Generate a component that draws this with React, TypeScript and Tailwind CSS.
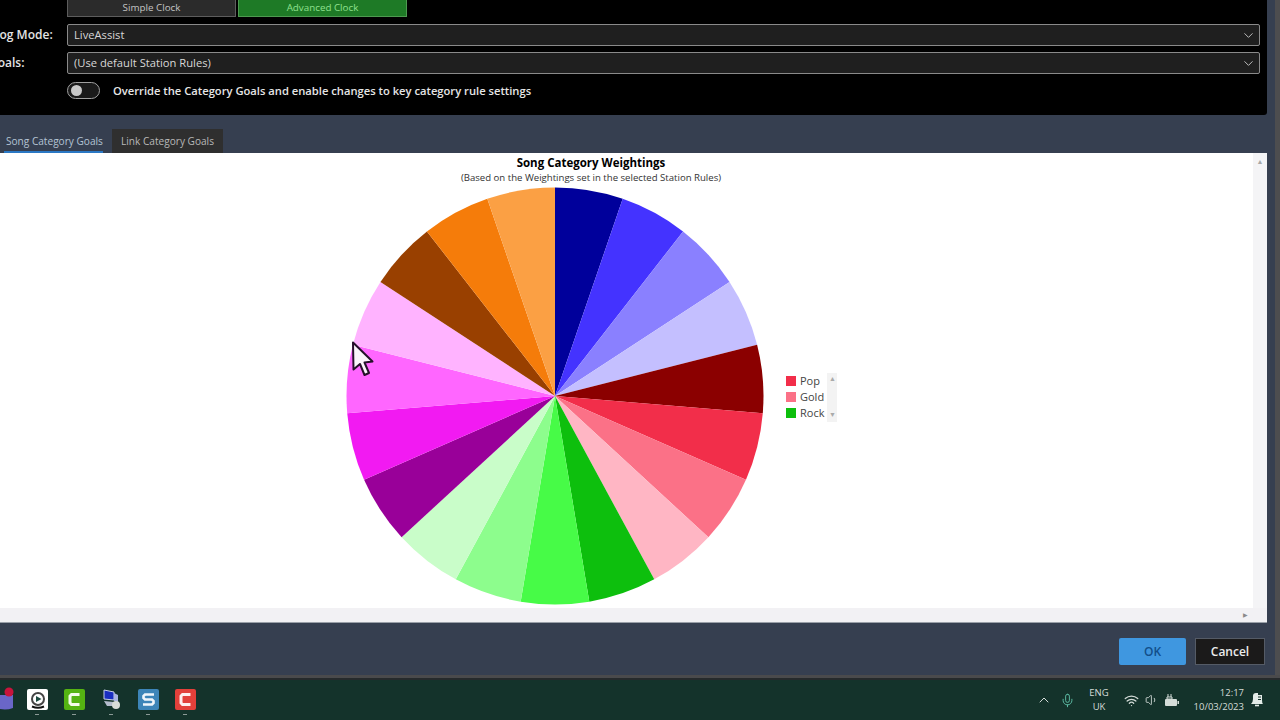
import { ChevronDown, ChevronUp, Mic, Wifi, Volume1 } from "lucide-react";

const slices = [
  "#00009b", "#4433ff", "#8a80ff", "#c4bfff", "#8b0000", "#f22e4a", "#fb7187", "#ffb6c4", "#0dbf0d", "#47fb47",
  "#8dfd8d", "#c9fdc9", "#990099", "#f21af2", "#ff66ff", "#ffb3ff", "#994000", "#f57c0a", "#fba044",
];

function Pie() {
  const cx = 210;
  const cy = 210;
  const r = 208.5;
  const step = (Math.PI * 2) / slices.length;
  return (
    <svg width={420} height={420} viewBox="0 0 420 420" className="shrink-0">
      {slices.map((c, i) => {
        const a = i * step;
        const b = (i + 1) * step;
        const d = `M${cx} ${cy}L${cx + r * Math.sin(a)} ${cy - r * Math.cos(a)}A${r} ${r} 0 0 1 ${cx + r * Math.sin(b)} ${cy - r * Math.cos(b)}Z`;
        return <path key={c} d={d} fill={c} />;
      })}
    </svg>
  );
}

function SelectBox({ label, value, labelClass }: { label: string; value: string; labelClass: string }) {
  return (
    <div className="flex items-center h-[22px]">
      <div className={`shrink-0 text-[12px] font-semibold text-[#e4e4e4] whitespace-nowrap ${labelClass}`}>{label}</div>
      <div className="flex-1 h-[22px] flex items-center justify-between bg-[#1f1f1f] border border-[#8a8a8a] rounded-[2px] pl-[6px] pr-[3px] text-[11.2px] text-[#d8d8d8]">
        <span>{value}</span>
        <ChevronDown size={15} strokeWidth={1.5} className="text-[#c4c4c4]" />
      </div>
    </div>
  );
}

function AppIcon({ className, children }: { className: string; children?: React.ReactNode }) {
  return (
    <div className="relative w-[21px] h-[21px] shrink-0">
      <div className={`w-[21px] h-[21px] rounded-[2px] flex items-center justify-center ${className}`}>{children}</div>
      <div className="absolute left-[8px] -bottom-[5px] w-[4px] h-[1px] bg-[#8b9a96]" />
    </div>
  );
}

export default function App() {
  return (
    <div className="w-[1280px] h-[720px] overflow-hidden flex flex-col bg-[#1c2a28] font-['Open_Sans','Noto_Sans',sans-serif]">
      <div className="h-[675px] shrink-0 flex">
        <div className="w-[1275px] shrink-0 bg-[#363f50] flex flex-col">
          {/* top settings block */}
          <div className="h-[115px] w-[1267px] shrink-0 bg-black rounded-br-[3px] pr-[7px]">
            <div className="flex gap-[2px] pl-[67px] h-[17px]">
              <div className="w-[169px] bg-[#2b2b2b] border border-[#5d5d5d] border-t-0 text-[9.8px] text-[#c4c4c4] flex items-center justify-center">Simple Clock</div>
              <div className="w-[169px] bg-[#1e7a26] border border-[#4d9a50] border-t-0 text-[9.8px] text-[#8fe08f] flex items-center justify-center">Advanced Clock</div>
            </div>
            <div className="mt-[7px] flex flex-col gap-[6px]">
              <SelectBox label="Log Mode:" value="LiveAssist" labelClass="w-[74px] -ml-[7px]" />
              <SelectBox label="Goals:" value="(Use default Station Rules)" labelClass="w-[78px] -ml-[11px]" />
            </div>
            <div className="mt-[8px] pl-[67px] flex items-center gap-[13px]">
              <div className="w-[33px] h-[17px] rounded-full border border-[#a0a0a0] bg-[#1a1a1a] flex items-center pl-[3px]">
                <div className="w-[11px] h-[11px] rounded-full bg-[#c9c9c9]" />
              </div>
              <span className="pt-[1px] text-[11.2px] font-semibold text-[#e6e6e6] whitespace-nowrap">Override the Category Goals and enable changes to key category rule settings</span>
            </div>
          </div>

          {/* tabs */}
          <div className="h-[38px] shrink-0 flex items-end">
            <div className="w-[104px] h-[24px] relative flex items-center pl-[6px] pt-[1px] text-[10.1px] text-[#b4c4d4] whitespace-nowrap">
              Song Category Goals
              <div className="absolute left-[4px] right-[1px] bottom-0 h-[2px] bg-[#2a78c4]" />
            </div>
            <div className="ml-[8px] w-[111px] h-[24px] pt-[1px] bg-[#2f2f2f] flex items-center justify-center text-[10.1px] text-[#b8b8b8] whitespace-nowrap">Link Category Goals</div>
          </div>

          {/* chart panel */}
          <div className="h-[470px] w-[1267px] shrink-0 bg-white border-b border-[#9aa0a8] flex flex-col relative">
            <div className="flex-1 flex min-h-0">
              <div className="flex-1 min-w-0">
                <div className="w-[1182px] pt-[2px] text-center text-black">
                  <div className="text-[11.5px] font-bold leading-[15px]">Song Category Weightings</div>
                  <div className="text-[9.6px] leading-[15px] text-[#333]">(Based on the Weightings set in the selected Station Rules)</div>
                </div>
                <div className="flex items-center mt-[1px] ml-[345px]">
                  <Pie />
                  <div className="ml-[21px] mt-[2px] flex items-stretch">
                    <div className="flex flex-col gap-[3px]">
                      {[["#f22e4a", "Pop"], ["#fb7187", "Gold"], ["#0dbf0d", "Rock"]].map(([c, l]) => (
                        <div key={l} className="flex items-center gap-[4px] h-[13px] text-[11px] text-[#444]">
                          <div className="w-[10px] h-[10px]" style={{ background: c }} />
                          {l}
                        </div>
                      ))}
                    </div>
                    <div className="ml-[3px] -my-[2px] w-[10px] bg-[#f3f3f3] flex flex-col justify-between items-center text-[#aaa] text-[7px] py-[1px]">
                      <span>▲</span>
                      <span>▼</span>
                    </div>
                  </div>
                </div>
              </div>
              <div className="w-[14px] shrink-0 bg-[#f4f4f6] flex justify-center pt-[4px] text-[7px] text-[#a8a8a8]">▲</div>
            </div>
            <div className="h-[14px] shrink-0 bg-[#f2f1f4] flex justify-end items-center pr-[19px] text-[6px] text-[#8a8a8a]">▶</div>
            {/* mouse pointer */}
            <svg width={26} height={38} viewBox="0 0 26 38" className="absolute left-[350px] top-[187px]">
              <path d="M3 2.5L22.5 21.5L14.5 22.5L19 33L14.5 35L10 24L3.5 29.5Z" fill="#fbf4fb" stroke="#26102a" strokeWidth={2} strokeLinejoin="round" />
            </svg>
          </div>

          {/* footer buttons */}
          <div className="flex-1 flex justify-end items-start gap-[9px] pt-[15px] pr-[10px]">
            <div className="w-[67px] h-[27px] rounded-[2px] bg-[#3f97e0] flex items-center justify-center text-[12px] font-semibold text-[#124e8a]">OK</div>
            <div className="w-[70px] h-[27px] bg-[#1b1a1a] border border-[#555b66] flex items-center justify-center text-[12px] font-semibold text-[#ececec]">Cancel</div>
          </div>
        </div>
        <div className="w-[5px] shrink-0 bg-[#4d4d4f]" />
      </div>
      <div className="h-[3px] shrink-0 bg-[#4a4a4c]" />
      <div className="h-[2px] shrink-0 bg-[#262a2c]" />

      {/* taskbar */}
      <div className="flex-1 bg-[#14332b] flex items-center">
        <div className="flex items-center gap-[16px] -ml-[10px] pb-[1px]">
          <div className="relative w-[21px] h-[21px] shrink-0">
            <svg width={21} height={21} viewBox="0 0 21 21" className="overflow-visible">
              <path d="M3 6H23V19Q15 22 6 19L3 14Z" fill="#6a66c8" />
              <circle cx={19} cy={3} r={4.5} fill="#c8143c" />
            </svg>
          </div>
          <AppIcon className="bg-white">
            <svg width={18} height={18} viewBox="0 0 18 18">
              <circle cx={9} cy={8} r={6} fill="none" stroke="#444" strokeWidth={2} />
              <path d="M7 5L12.5 8L7 11Z" fill="#1c4a40" />
              <path d="M3 15.5Q9 18 15 15.5" fill="none" stroke="#111" strokeWidth={2} />
            </svg>
          </AppIcon>
          <AppIcon className="bg-[#55b312]">
            <svg width={17} height={17} viewBox="0 0 17 17">
              <path d="M13.5 3.5H5.5L4 5V12L5.5 13.5H13.5" fill="none" stroke="#f3fbe8" strokeWidth={3} />
            </svg>
          </AppIcon>
          <div className="relative w-[21px] h-[21px] shrink-0">
            <svg width={21} height={21} viewBox="0 0 21 21">
              <path d="M3 1L13 3V11L3 10Z" fill="#1a2ec0" stroke="#c8d0e8" />
              <path d="M13 4L17 6V13L13 12Z" fill="#aab4e0" />
              <path d="M3 12L13 13L16 17H6Z" fill="#b4bccc" />
              <circle cx={15} cy={16} r={4} fill="#d8dcd8" />
            </svg>
            <div className="absolute left-[8px] -bottom-[5px] w-[4px] h-[1px] bg-[#8b9a96]" />
          </div>
          <AppIcon className="bg-[#3d85b8]">
            <svg width={17} height={17} viewBox="0 0 17 17">
              <path d="M14 3.5H5L3.5 5V7L5 8.5H12L13.5 10V12L12 13.5H3" fill="none" stroke="#f0f6fb" strokeWidth={2.6} />
            </svg>
          </AppIcon>
          <AppIcon className="bg-[#e2403a]">
            <svg width={17} height={17} viewBox="0 0 17 17">
              <path d="M13.5 3.5H5.5L4 5V12L5.5 13.5H13.5" fill="none" stroke="#fdeeee" strokeWidth={3} />
            </svg>
          </AppIcon>
        </div>
        <div className="ml-auto flex items-center text-[#d4dcd8]">
          <ChevronUp size={16} strokeWidth={1.5} />
          <Mic size={15} strokeWidth={1.5} className="ml-[8px] text-[#5fc0a8]" />
          <div className="ml-[10px] w-[28px] text-center text-[9.5px] leading-[14px]">ENG<br />UK</div>
          <Wifi size={15} strokeWidth={2} className="ml-[11px]" />
          <Volume1 size={14} strokeWidth={1.5} className="ml-[6px]" />
          <svg width={16} height={14} viewBox="0 0 16 14" className="ml-[5px]">
            <path d="M4 1V4M7 1V4M3 4H8V6H3Z" fill="none" stroke="#d4dcd8" strokeWidth={1} />
            <rect x={1} y={6} width={12} height={7} rx={1} fill="#d4dcd8" />
            <rect x={13.5} y={8} width={1.5} height={3} fill="#d4dcd8" />
          </svg>
          <div className="ml-[0px] w-[64px] text-right text-[9.5px] leading-[14px]">12:17<br />10/03/2023</div>
          <svg width={14} height={16} viewBox="0 0 14 16" className="ml-[6px] mr-[16px]">
            <path d="M3 4Q3 1 6 1H8V3H12V8Q12 11 13 12H1Q3 10 3 7Z" fill="#e4ece8" />
            <path d="M5 13.5H9" stroke="#e4ece8" strokeWidth={1.6} />
            <path d="M8 5H11M8 7.5H11" stroke="#14332b" strokeWidth={1} />
          </svg>
        </div>
      </div>
    </div>
  );
}
